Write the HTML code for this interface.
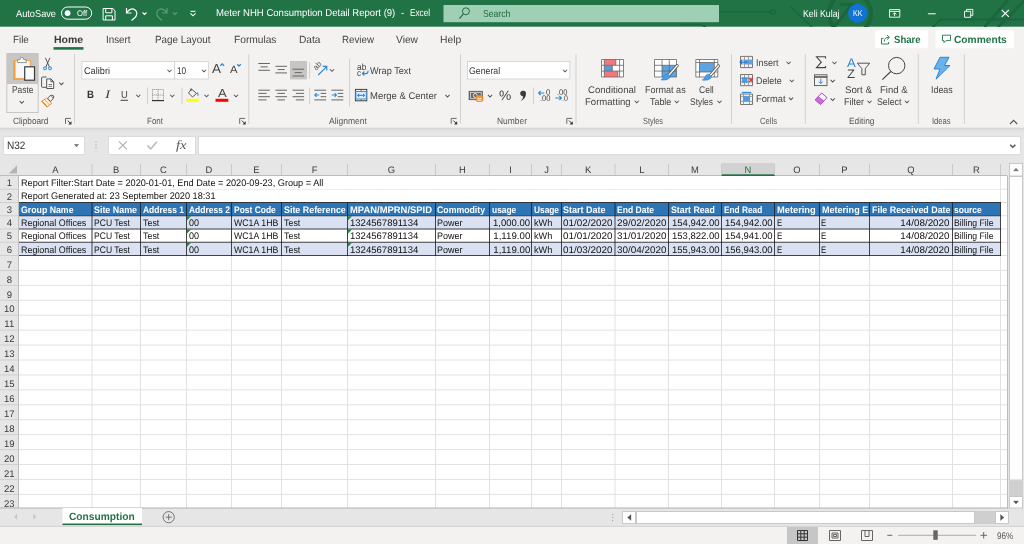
<!DOCTYPE html>
<html lang="en"><head><meta charset="utf-8"><title>Meter NHH Consumption Detail Report (9) - Excel</title>
<style>
html,body{margin:0;padding:0;}
body{width:1024px;height:544px;overflow:hidden;position:relative;background:#e6e6e6;font-family:"Liberation Sans",sans-serif;}
#bg{position:absolute;left:0;top:0;width:1024px;height:544px;will-change:transform;}
#tx{position:absolute;left:0;top:0;width:1024px;height:544px;will-change:transform;}
.t{position:absolute;white-space:pre;display:block;text-rendering:geometricPrecision;}
</style></head><body>
<svg id="bg" width="1024" height="544" viewBox="0 0 1024 544">
<rect x="0" y="0" width="1024" height="27" fill="#217346" />
<rect x="0" y="26.7" width="1024" height="101.1" fill="#f3f2f1" />
<rect x="0" y="127.8" width="1024" height="1" fill="#d3d3d3" />
<rect x="0" y="128.8" width="1024" height="1" fill="#dadada" />
<rect x="0" y="129.8" width="1024" height="1" fill="#e0e0e0" />
<rect x="0" y="130.8" width="1024" height="1" fill="#e4e4e4" />
<rect x="0" y="131.8" width="1024" height="412.2" fill="#e6e6e6" />
<rect x="3.5" y="136.5" width="81" height="18" fill="#fff" stroke="#dcdcdc" stroke-width="1" />
<rect x="108.5" y="136.5" width="87" height="18" fill="#fff" stroke="#dcdcdc" stroke-width="1" />
<rect x="198.5" y="136.5" width="822" height="18" fill="#fff" stroke="#dcdcdc" stroke-width="1" />
<path d="M74.5 144.5L76.5 146.8L78.5 144.5Z" stroke="#666" stroke-width="0.5" fill="#666" />
<rect x="95.5" y="141.5" width="1" height="1" fill="#999" />
<rect x="95.5" y="144.5" width="1" height="1" fill="#999" />
<rect x="95.5" y="147.5" width="1" height="1" fill="#999" />
<path d="M118.8 141.4L126.9 149.2M126.9 141.4L118.8 149.2" stroke="#b4b4b4" stroke-width="1.2" fill="none" />
<path d="M147.4 145.6L150.8 149L156.8 141.8" stroke="#b8b8b8" stroke-width="1.5" fill="none" />
<path d="M1010.1999999999999 144.7L1012.8 147.3L1015.4 144.7" stroke="#555" stroke-width="1.5" fill="none" />
<rect x="0" y="160" width="1024" height="16" fill="#e6e6e6" />
<rect x="19" y="176" width="988.5" height="332" fill="#fff" />
<rect x="721.5" y="163" width="53" height="12" fill="#d2d2d2" />
<line x1="0" y1="175.5" x2="1007.5" y2="175.5" stroke="#bcbcbc" stroke-width="1" />
<line x1="18.5" y1="176" x2="18.5" y2="508" stroke="#bcbcbc" stroke-width="1" />
<rect x="721.5" y="174.3" width="53.3" height="1.7" fill="#217346" />
<line x1="92" y1="164" x2="92" y2="175" stroke="#c9c9c9" stroke-width="1" />
<line x1="140.5" y1="164" x2="140.5" y2="175" stroke="#c9c9c9" stroke-width="1" />
<line x1="186.5" y1="164" x2="186.5" y2="175" stroke="#c9c9c9" stroke-width="1" />
<line x1="231.5" y1="164" x2="231.5" y2="175" stroke="#c9c9c9" stroke-width="1" />
<line x1="281.5" y1="164" x2="281.5" y2="175" stroke="#c9c9c9" stroke-width="1" />
<line x1="347.5" y1="164" x2="347.5" y2="175" stroke="#c9c9c9" stroke-width="1" />
<line x1="435.5" y1="164" x2="435.5" y2="175" stroke="#c9c9c9" stroke-width="1" />
<line x1="489.5" y1="164" x2="489.5" y2="175" stroke="#c9c9c9" stroke-width="1" />
<line x1="531.5" y1="164" x2="531.5" y2="175" stroke="#c9c9c9" stroke-width="1" />
<line x1="561.5" y1="164" x2="561.5" y2="175" stroke="#c9c9c9" stroke-width="1" />
<line x1="615" y1="164" x2="615" y2="175" stroke="#c9c9c9" stroke-width="1" />
<line x1="668.5" y1="164" x2="668.5" y2="175" stroke="#c9c9c9" stroke-width="1" />
<line x1="721.5" y1="164" x2="721.5" y2="175" stroke="#c9c9c9" stroke-width="1" />
<line x1="774.5" y1="164" x2="774.5" y2="175" stroke="#c9c9c9" stroke-width="1" />
<line x1="819.5" y1="164" x2="819.5" y2="175" stroke="#c9c9c9" stroke-width="1" />
<line x1="869.5" y1="164" x2="869.5" y2="175" stroke="#c9c9c9" stroke-width="1" />
<line x1="952.5" y1="164" x2="952.5" y2="175" stroke="#c9c9c9" stroke-width="1" />
<line x1="1000.5" y1="164" x2="1000.5" y2="175" stroke="#c9c9c9" stroke-width="1" />
<path d="M17 165.3L17 173.6L8.8 173.6Z" stroke="none" stroke-width="0" fill="#b4b4b4" />
<line x1="92" y1="176" x2="92" y2="508" stroke="#e2e2e2" stroke-width="1" />
<line x1="140.5" y1="176" x2="140.5" y2="508" stroke="#e2e2e2" stroke-width="1" />
<line x1="186.5" y1="176" x2="186.5" y2="508" stroke="#e2e2e2" stroke-width="1" />
<line x1="231.5" y1="176" x2="231.5" y2="508" stroke="#e2e2e2" stroke-width="1" />
<line x1="281.5" y1="176" x2="281.5" y2="508" stroke="#e2e2e2" stroke-width="1" />
<line x1="347.5" y1="176" x2="347.5" y2="508" stroke="#e2e2e2" stroke-width="1" />
<line x1="435.5" y1="176" x2="435.5" y2="508" stroke="#e2e2e2" stroke-width="1" />
<line x1="489.5" y1="176" x2="489.5" y2="508" stroke="#e2e2e2" stroke-width="1" />
<line x1="531.5" y1="176" x2="531.5" y2="508" stroke="#e2e2e2" stroke-width="1" />
<line x1="561.5" y1="176" x2="561.5" y2="508" stroke="#e2e2e2" stroke-width="1" />
<line x1="615" y1="176" x2="615" y2="508" stroke="#e2e2e2" stroke-width="1" />
<line x1="668.5" y1="176" x2="668.5" y2="508" stroke="#e2e2e2" stroke-width="1" />
<line x1="721.5" y1="176" x2="721.5" y2="508" stroke="#e2e2e2" stroke-width="1" />
<line x1="774.5" y1="176" x2="774.5" y2="508" stroke="#e2e2e2" stroke-width="1" />
<line x1="819.5" y1="176" x2="819.5" y2="508" stroke="#e2e2e2" stroke-width="1" />
<line x1="869.5" y1="176" x2="869.5" y2="508" stroke="#e2e2e2" stroke-width="1" />
<line x1="952.5" y1="176" x2="952.5" y2="508" stroke="#e2e2e2" stroke-width="1" />
<line x1="1000.5" y1="176" x2="1000.5" y2="508" stroke="#e2e2e2" stroke-width="1" />
<line x1="19" y1="189.25" x2="1007.5" y2="189.25" stroke="#e2e2e2" stroke-width="1" />
<line x1="0" y1="189.25" x2="18.5" y2="189.25" stroke="#cfcfcf" stroke-width="1" />
<line x1="19" y1="202.5" x2="1007.5" y2="202.5" stroke="#e2e2e2" stroke-width="1" />
<line x1="0" y1="202.5" x2="18.5" y2="202.5" stroke="#cfcfcf" stroke-width="1" />
<line x1="19" y1="215.75" x2="1007.5" y2="215.75" stroke="#e2e2e2" stroke-width="1" />
<line x1="0" y1="215.75" x2="18.5" y2="215.75" stroke="#cfcfcf" stroke-width="1" />
<line x1="19" y1="229" x2="1007.5" y2="229" stroke="#e2e2e2" stroke-width="1" />
<line x1="0" y1="229" x2="18.5" y2="229" stroke="#cfcfcf" stroke-width="1" />
<line x1="19" y1="242.25" x2="1007.5" y2="242.25" stroke="#e2e2e2" stroke-width="1" />
<line x1="0" y1="242.25" x2="18.5" y2="242.25" stroke="#cfcfcf" stroke-width="1" />
<line x1="19" y1="255.5" x2="1007.5" y2="255.5" stroke="#e2e2e2" stroke-width="1" />
<line x1="0" y1="255.5" x2="18.5" y2="255.5" stroke="#cfcfcf" stroke-width="1" />
<line x1="19" y1="270.43" x2="1007.5" y2="270.43" stroke="#e2e2e2" stroke-width="1" />
<line x1="0" y1="270.43" x2="18.5" y2="270.43" stroke="#cfcfcf" stroke-width="1" />
<line x1="19" y1="285.36" x2="1007.5" y2="285.36" stroke="#e2e2e2" stroke-width="1" />
<line x1="0" y1="285.36" x2="18.5" y2="285.36" stroke="#cfcfcf" stroke-width="1" />
<line x1="19" y1="300.29" x2="1007.5" y2="300.29" stroke="#e2e2e2" stroke-width="1" />
<line x1="0" y1="300.29" x2="18.5" y2="300.29" stroke="#cfcfcf" stroke-width="1" />
<line x1="19" y1="315.22" x2="1007.5" y2="315.22" stroke="#e2e2e2" stroke-width="1" />
<line x1="0" y1="315.22" x2="18.5" y2="315.22" stroke="#cfcfcf" stroke-width="1" />
<line x1="19" y1="330.15000000000003" x2="1007.5" y2="330.15000000000003" stroke="#e2e2e2" stroke-width="1" />
<line x1="0" y1="330.15000000000003" x2="18.5" y2="330.15000000000003" stroke="#cfcfcf" stroke-width="1" />
<line x1="19" y1="345.08000000000004" x2="1007.5" y2="345.08000000000004" stroke="#e2e2e2" stroke-width="1" />
<line x1="0" y1="345.08000000000004" x2="18.5" y2="345.08000000000004" stroke="#cfcfcf" stroke-width="1" />
<line x1="19" y1="360.01000000000005" x2="1007.5" y2="360.01000000000005" stroke="#e2e2e2" stroke-width="1" />
<line x1="0" y1="360.01000000000005" x2="18.5" y2="360.01000000000005" stroke="#cfcfcf" stroke-width="1" />
<line x1="19" y1="374.94000000000005" x2="1007.5" y2="374.94000000000005" stroke="#e2e2e2" stroke-width="1" />
<line x1="0" y1="374.94000000000005" x2="18.5" y2="374.94000000000005" stroke="#cfcfcf" stroke-width="1" />
<line x1="19" y1="389.87000000000006" x2="1007.5" y2="389.87000000000006" stroke="#e2e2e2" stroke-width="1" />
<line x1="0" y1="389.87000000000006" x2="18.5" y2="389.87000000000006" stroke="#cfcfcf" stroke-width="1" />
<line x1="19" y1="404.80000000000007" x2="1007.5" y2="404.80000000000007" stroke="#e2e2e2" stroke-width="1" />
<line x1="0" y1="404.80000000000007" x2="18.5" y2="404.80000000000007" stroke="#cfcfcf" stroke-width="1" />
<line x1="19" y1="419.7300000000001" x2="1007.5" y2="419.7300000000001" stroke="#e2e2e2" stroke-width="1" />
<line x1="0" y1="419.7300000000001" x2="18.5" y2="419.7300000000001" stroke="#cfcfcf" stroke-width="1" />
<line x1="19" y1="434.6600000000001" x2="1007.5" y2="434.6600000000001" stroke="#e2e2e2" stroke-width="1" />
<line x1="0" y1="434.6600000000001" x2="18.5" y2="434.6600000000001" stroke="#cfcfcf" stroke-width="1" />
<line x1="19" y1="449.5900000000001" x2="1007.5" y2="449.5900000000001" stroke="#e2e2e2" stroke-width="1" />
<line x1="0" y1="449.5900000000001" x2="18.5" y2="449.5900000000001" stroke="#cfcfcf" stroke-width="1" />
<line x1="19" y1="464.5200000000001" x2="1007.5" y2="464.5200000000001" stroke="#e2e2e2" stroke-width="1" />
<line x1="0" y1="464.5200000000001" x2="18.5" y2="464.5200000000001" stroke="#cfcfcf" stroke-width="1" />
<line x1="19" y1="479.4500000000001" x2="1007.5" y2="479.4500000000001" stroke="#e2e2e2" stroke-width="1" />
<line x1="0" y1="479.4500000000001" x2="18.5" y2="479.4500000000001" stroke="#cfcfcf" stroke-width="1" />
<line x1="19" y1="494.3800000000001" x2="1007.5" y2="494.3800000000001" stroke="#e2e2e2" stroke-width="1" />
<line x1="0" y1="494.3800000000001" x2="18.5" y2="494.3800000000001" stroke="#cfcfcf" stroke-width="1" />
<rect x="19.5" y="176.2" width="980.4" height="12.55" fill="#fff" />
<rect x="19.5" y="189.75" width="980.4" height="12.3" fill="#fff" />
<rect x="19" y="202.5" width="981.5" height="13.25" fill="#2e75b6" />
<rect x="19" y="215.75" width="981.5" height="13.25" fill="#d9e1f2" />
<rect x="19" y="242.25" width="981.5" height="13.25" fill="#d9e1f2" />
<line x1="19" y1="202.5" x2="1001.0" y2="202.5" stroke="#1a1a1a" stroke-width="0.8" />
<line x1="19" y1="215.75" x2="1001.0" y2="215.75" stroke="#1a1a1a" stroke-width="0.8" />
<line x1="19" y1="229" x2="1001.0" y2="229" stroke="#1a1a1a" stroke-width="0.8" />
<line x1="19" y1="242.25" x2="1001.0" y2="242.25" stroke="#1a1a1a" stroke-width="0.8" />
<line x1="19" y1="255.5" x2="1001.0" y2="255.5" stroke="#1a1a1a" stroke-width="0.8" />
<line x1="92" y1="202.5" x2="92" y2="255.9" stroke="#1a1a1a" stroke-width="0.8" />
<line x1="140.5" y1="202.5" x2="140.5" y2="255.9" stroke="#1a1a1a" stroke-width="0.8" />
<line x1="186.5" y1="202.5" x2="186.5" y2="255.9" stroke="#1a1a1a" stroke-width="0.8" />
<line x1="231.5" y1="202.5" x2="231.5" y2="255.9" stroke="#1a1a1a" stroke-width="0.8" />
<line x1="281.5" y1="202.5" x2="281.5" y2="255.9" stroke="#1a1a1a" stroke-width="0.8" />
<line x1="347.5" y1="202.5" x2="347.5" y2="255.9" stroke="#1a1a1a" stroke-width="0.8" />
<line x1="435.5" y1="202.5" x2="435.5" y2="255.9" stroke="#1a1a1a" stroke-width="0.8" />
<line x1="489.5" y1="202.5" x2="489.5" y2="255.9" stroke="#1a1a1a" stroke-width="0.8" />
<line x1="531.5" y1="202.5" x2="531.5" y2="255.9" stroke="#1a1a1a" stroke-width="0.8" />
<line x1="561.5" y1="202.5" x2="561.5" y2="255.9" stroke="#1a1a1a" stroke-width="0.8" />
<line x1="615" y1="202.5" x2="615" y2="255.9" stroke="#1a1a1a" stroke-width="0.8" />
<line x1="668.5" y1="202.5" x2="668.5" y2="255.9" stroke="#1a1a1a" stroke-width="0.8" />
<line x1="721.5" y1="202.5" x2="721.5" y2="255.9" stroke="#1a1a1a" stroke-width="0.8" />
<line x1="774.5" y1="202.5" x2="774.5" y2="255.9" stroke="#1a1a1a" stroke-width="0.8" />
<line x1="819.5" y1="202.5" x2="819.5" y2="255.9" stroke="#1a1a1a" stroke-width="0.8" />
<line x1="869.5" y1="202.5" x2="869.5" y2="255.9" stroke="#1a1a1a" stroke-width="0.8" />
<line x1="952.5" y1="202.5" x2="952.5" y2="255.9" stroke="#1a1a1a" stroke-width="0.8" />
<line x1="1000.5" y1="202.5" x2="1000.5" y2="255.9" stroke="#1a1a1a" stroke-width="0.8" />
<path d="M187.0 216.25L191.0 216.25L187.0 220.25Z" stroke="none" stroke-width="0" fill="#1e8a3c" />
<path d="M187.0 229.5L191.0 229.5L187.0 233.5Z" stroke="none" stroke-width="0" fill="#1e8a3c" />
<path d="M187.0 242.75L191.0 242.75L187.0 246.75Z" stroke="none" stroke-width="0" fill="#1e8a3c" />
<path d="M348.0 216.25L352.0 216.25L348.0 220.25Z" stroke="none" stroke-width="0" fill="#1e8a3c" />
<path d="M348.0 229.5L352.0 229.5L348.0 233.5Z" stroke="none" stroke-width="0" fill="#1e8a3c" />
<path d="M348.0 242.75L352.0 242.75L348.0 246.75Z" stroke="none" stroke-width="0" fill="#1e8a3c" />
<line x1="1007.5" y1="176" x2="1007.5" y2="508" stroke="#bcbcbc" stroke-width="1" />
<rect x="1009.5" y="163.5" width="13" height="12.5" fill="#fff" stroke="#c8c8c8" stroke-width="1" />
<path d="M1013.5 171L1016 168L1018.5 171Z" stroke="#777" stroke-width="0.3" fill="#777" />
<rect x="1009.5" y="176.5" width="13" height="303.5" fill="#fff" stroke="#c8c8c8" stroke-width="1" />
<rect x="1009" y="480.5" width="14" height="16" fill="#cfcfcf" />
<rect x="1009.5" y="496.5" width="13" height="11.5" fill="#fff" stroke="#c8c8c8" stroke-width="1" />
<path d="M1013.5 501L1016 504L1018.5 501Z" stroke="#555" stroke-width="0.3" fill="#555" />
<line x1="0" y1="508" x2="1008.5" y2="508" stroke="#b0b0b0" stroke-width="1" />
<rect x="62.5" y="508" width="79.5" height="16" fill="#fff" />
<rect x="62.5" y="523.5" width="79.5" height="1.6" fill="#217346" />
<path d="M17 514L14.5 516.7L17 519.4Z" stroke="#c4c4c4" stroke-width="0.3" fill="#c4c4c4" />
<path d="M33.5 514L36 516.7L33.5 519.4Z" stroke="#c4c4c4" stroke-width="0.3" fill="#c4c4c4" />
<circle cx="168.7" cy="517.2" r="5.6" fill="none" stroke="#666" stroke-width="0.9"/>
<path d="M165.7 517.2H171.7M168.7 514.2V520.2" stroke="#666" stroke-width="0.9" fill="none" />
<rect x="612" y="514" width="1.2" height="1.2" fill="#aaa" />
<rect x="612" y="517" width="1.2" height="1.2" fill="#aaa" />
<rect x="612" y="520" width="1.2" height="1.2" fill="#aaa" />
<rect x="622.5" y="511.5" width="13" height="12" fill="#fff" stroke="#c8c8c8" stroke-width="1" />
<path d="M631 514.5L627.5 517.5L631 520.5Z" stroke="#555" stroke-width="0.3" fill="#555" />
<rect x="636.5" y="511.5" width="338" height="12" fill="#fff" stroke="#c8c8c8" stroke-width="1" />
<rect x="975" y="511" width="20" height="13" fill="#cfcfcf" />
<rect x="995.5" y="511.5" width="13" height="12" fill="#fff" stroke="#c8c8c8" stroke-width="1" />
<path d="M1000.5 514.5L1004 517.5L1000.5 520.5Z" stroke="#555" stroke-width="0.3" fill="#555" />
<rect x="0" y="526" width="1024" height="18" fill="#f3f2f1" />
<line x1="0" y1="526.3" x2="1024" y2="526.3" stroke="#cfcfcf" stroke-width="1" />
<rect x="787" y="527" width="31" height="17" fill="#c6c6c6" />
<path d="M797.5 530.5H807.5V540.5H797.5ZM800.8 530.5V540.5M804.2 530.5V540.5M797.5 533.8H807.5M797.5 537.2H807.5" stroke="#333" stroke-width="1" fill="none" />
<path d="M829.5 530.5H840.5V540.5H829.5ZM832 533H838V538H832ZM833.5 534.5H836.5V536.5H833.5Z" stroke="#555" stroke-width="0.9" fill="none" />
<path d="M861.5 530.5H872.5V540.5H861.5ZM865 530.5V536.5H869V530.5" stroke="#555" stroke-width="0.9" fill="none" />
<line x1="887.3" y1="535.3" x2="892.3" y2="535.3" stroke="#666" stroke-width="1" />
<line x1="898" y1="535.3" x2="976" y2="535.3" stroke="#999" stroke-width="0.8" />
<rect x="933.3" y="530.3" width="4.4" height="9.5" fill="#666" />
<path d="M980.5 535.3H987M983.7 532V538.5" stroke="#666" stroke-width="1" fill="none" />
<clipPath id="tb"><rect x="0" y="0" width="1024" height="27"/></clipPath><g clip-path="url(#tb)">
<path d="M719 11.8H770.5" stroke="#1b663c" stroke-width="1.4" fill="none" />
<circle cx="773" cy="11.8" r="2.4" fill="none" stroke="#1b663c" stroke-width="1.3"/>
<circle cx="850" cy="13.5" r="21" fill="none" stroke="#1b663c" stroke-width="4"/>
<path d="M834 27L851 6M840 4.5H852.5V15" stroke="#1b663c" stroke-width="3.2" fill="none" />
<path d="M790 6L812 27" stroke="#1b663c" stroke-width="1.6" fill="none" />
<path d="M680 24.5H700L706 27" stroke="#1b663c" stroke-width="1.4" fill="none" />
<path d="M932.5 27.5L940.5 19.5H1024" stroke="#1b663c" stroke-width="2" fill="none" />
<path d="M984.5 27L1008 0" stroke="#1b663c" stroke-width="2.8" fill="none" />
<path d="M998 27L1024 1" stroke="#1b663c" stroke-width="2.8" fill="none" />
</g>
<rect x="61.5" y="7" width="30.2" height="12.2" rx="6.1" fill="none" stroke="#ffffff" stroke-width="1"/>
<circle cx="67.6" cy="13.1" r="2.9" fill="#ffffff"/>
<path d="M103.1 8.5H112.8L115 10.7V20H103.1ZM105.7 8.5V12.8H111.9V8.5M105.7 20V15.8H112.4V20" stroke="#ffffff" stroke-width="1" fill="none" />
<path d="M126.5 8V13H131.5M126.8 12.8C128.5 9.5 132 8 134.5 9.5C137.5 11.3 137.5 15 135 17.5L131.5 20.5" stroke="#ffffff" stroke-width="1.2" fill="none" />
<path d="M142.5 12.5L144.5 14.5L146.5 12.5" stroke="#ffffff" stroke-width="1.1" fill="none" />
<path d="M167 8V13H162M166.7 12.8C165 9.5 161.5 8 159 9.5C156 11.3 156 15 158.5 17.5L162 20.5" stroke="#5b9b78" stroke-width="1.2" fill="none" />
<path d="M173 12.5L175 14.5L177 12.5" stroke="#5b9b78" stroke-width="1.1" fill="none" />
<path d="M190.5 11.3H195.5" stroke="#ffffff" stroke-width="1" fill="none" />
<path d="M190.5 13.3L193 15.8L195.5 13.3" stroke="#ffffff" stroke-width="1.1" fill="none" />
<rect x="443.5" y="5" width="275.5" height="17.2" fill="#9fcfb4" />
<circle cx="465.9" cy="11.3" r="3.5" fill="none" stroke="#1f6a40" stroke-width="1"/>
<path d="M463.4 13.9L459.4 18.6" stroke="#1f6a40" stroke-width="1.1" fill="none" />
<circle cx="857.6" cy="13.3" r="9.6" fill="#0f74d4"/>
<path d="M889.5 9.6H899.8V17.2H889.5ZM889.5 11.4H899.8M894.6 16V12.8M892.9 14.4L894.6 12.7L896.3 14.4" stroke="#ffffff" stroke-width="0.9" fill="none" />
<line x1="927.9" y1="13.8" x2="935.7" y2="13.8" stroke="#ffffff" stroke-width="1" />
<path d="M964.5 11.3H970.7V17.3H964.5ZM966.5 11.3V9.4H972.8V15.4H970.7" stroke="#ffffff" stroke-width="0.9" fill="none" />
<path d="M1001.7 9.8L1008.9 16.9M1008.9 9.8L1001.7 16.9" stroke="#ffffff" stroke-width="1.1" fill="none" />
<rect x="53.5" y="47.1" width="30" height="2.6" fill="#217346" />
<rect x="875" y="30" width="53" height="18.3" rx="2" fill="#fff"/>
<rect x="935.5" y="30" width="78.5" height="18.3" rx="2" fill="#fff"/>
<path d="M883.5 38.3H881.5V44H888.5V42M884.3 41.5C884.3 38.6 885.8 37.3 888.8 37.3M887 35L889.5 37.3L887 39.6" stroke="#217346" stroke-width="0.9" fill="none" />
<path d="M942.5 35.2H950.5V40.6H946L944 42.6V40.6H942.5Z" stroke="#217346" stroke-width="0.9" fill="none" />
<line x1="74.5" y1="54" x2="74.5" y2="123.7" stroke="#d2d0ce" stroke-width="1" />
<line x1="248.8" y1="54" x2="248.8" y2="123.7" stroke="#d2d0ce" stroke-width="1" />
<line x1="460.5" y1="54" x2="460.5" y2="123.7" stroke="#d2d0ce" stroke-width="1" />
<line x1="576" y1="54" x2="576" y2="123.7" stroke="#d2d0ce" stroke-width="1" />
<line x1="731.5" y1="54" x2="731.5" y2="123.7" stroke="#d2d0ce" stroke-width="1" />
<line x1="805.3" y1="54" x2="805.3" y2="123.7" stroke="#d2d0ce" stroke-width="1" />
<line x1="918.3" y1="54" x2="918.3" y2="123.7" stroke="#d2d0ce" stroke-width="1" />
<line x1="964.4" y1="54" x2="964.4" y2="123.7" stroke="#d2d0ce" stroke-width="1" />
<path d="M65.5 123.80000000000001V118.4H70.9" stroke="#6a6a6a" stroke-width="1" fill="none" />
<path d="M67.7 120.60000000000001L70.5 123.4" stroke="#333" stroke-width="1" fill="none" />
<path d="M71.5 121.2V124.4H68.3Z" stroke="none" stroke-width="0" fill="#333" />
<path d="M239.7 123.80000000000001V118.4H245.1" stroke="#6a6a6a" stroke-width="1" fill="none" />
<path d="M241.89999999999998 120.60000000000001L244.7 123.4" stroke="#333" stroke-width="1" fill="none" />
<path d="M245.7 121.2V124.4H242.5Z" stroke="none" stroke-width="0" fill="#333" />
<path d="M451.2 123.80000000000001V118.4H456.59999999999997" stroke="#6a6a6a" stroke-width="1" fill="none" />
<path d="M453.4 120.60000000000001L456.2 123.4" stroke="#333" stroke-width="1" fill="none" />
<path d="M457.2 121.2V124.4H454.0Z" stroke="none" stroke-width="0" fill="#333" />
<path d="M566.8 123.80000000000001V118.4H572.1999999999999" stroke="#6a6a6a" stroke-width="1" fill="none" />
<path d="M569.0 120.60000000000001L571.8 123.4" stroke="#333" stroke-width="1" fill="none" />
<path d="M572.8 121.2V124.4H569.5999999999999Z" stroke="none" stroke-width="0" fill="#333" />
<path d="M1010 124L1013.6 120.4L1017.2 124" stroke="#555" stroke-width="1.1" fill="none" />
<rect x="6.3" y="53" width="32.4" height="30" fill="#c8c6c4" />
<rect x="6.8" y="83.5" width="31.4" height="29" fill="none" stroke="#c8c6c4" stroke-width="1" />
<rect x="13.9" y="60.6" width="16.4" height="18.6" fill="#f7f7f7" stroke="#f0a040" stroke-width="1" />
<rect x="13.6" y="60.4" width="1.9" height="19.2" fill="#f0a040" />
<rect x="13.6" y="78.2" width="12" height="1.6" fill="#f0a040" />
<path d="M17.6 62.6V59.6H20Q20.2 57.4 21.9 57.4Q23.6 57.4 23.8 59.6H26.2V62.6Z" stroke="#8a8a8a" stroke-width="0.9" fill="#fbfbfb" />
<rect x="24.7" y="66.8" width="9.8" height="13.4" fill="#fbfbfb" stroke="#3b3b3b" stroke-width="1.2" />
<path d="M19.7 101.15L21.8 103.25L23.900000000000002 101.15" stroke="#555" stroke-width="1.05" fill="none" />
<path d="M45.4 57.8L49.4 67M49.9 57.8L45.9 67" stroke="#444444" stroke-width="0.9" fill="none" />
<circle cx="45" cy="68.3" r="1.55" fill="#bcdcf5" stroke="#2b88d8" stroke-width="0.9"/>
<circle cx="50" cy="68.3" r="1.55" fill="#bcdcf5" stroke="#2b88d8" stroke-width="0.9"/>
<path d="M46.5 77H42.6Q41.6 77 41.6 78V86.3Q41.6 87.3 42.6 87.3H46.5" stroke="#444444" stroke-width="0.9" fill="none" />
<path d="M46.7 78.9H50.9L53.7 81.7V88.5H46.7ZM50.9 78.9V81.7H53.7" stroke="#444444" stroke-width="0.9" fill="#f8f8f8" />
<path d="M48.5 84.5H52M48.5 86.4H52" stroke="#444444" stroke-width="0.7" fill="none" />
<path d="M59.3 82.55L61.4 84.64999999999999L63.5 82.55" stroke="#555" stroke-width="1.05" fill="none" />
<path d="M41.7 101.2L46.6 98.2L51.8 103.2L47 107Z" stroke="#e8821e" stroke-width="0.9" fill="#fdf3e7" />
<path d="M41.7 101.2L47 107L44.8 103.6Z" stroke="#e8821e" stroke-width="0.6" fill="#e8821e" />
<path d="M44.6 99.6L49.6 104.9" stroke="#e8821e" stroke-width="0.7" fill="none" />
<path d="M47.6 98.2L51 95L53.9 96L53.2 98.6L50.5 101.6Z" stroke="#555" stroke-width="0.9" fill="#f3f2f1" />
<path d="M50.9 95.4L53.2 98.4" stroke="#555" stroke-width="0.7" fill="none" />
<rect x="81.8" y="61.5" width="92.8" height="17.5" fill="#fff" stroke="#d8d6d4" stroke-width="1" />
<rect x="174.6" y="61.5" width="33.8" height="17.5" fill="#fff" stroke="#d8d6d4" stroke-width="1" />
<path d="M167.4 69.75L169.5 71.85L171.6 69.75" stroke="#555" stroke-width="1.05" fill="none" />
<path d="M201.9 69.75L204 71.85L206.1 69.75" stroke="#555" stroke-width="1.05" fill="none" />
<path d="M220.3 65.8L222.2 63.9L224.1 65.8" stroke="#2b88d8" stroke-width="1.3" fill="none" />
<path d="M237.2 64.2L239 66L240.8 64.2" stroke="#2b88d8" stroke-width="1.3" fill="none" />
<line x1="120.5" y1="100.3" x2="128" y2="100.3" stroke="#444" stroke-width="1" />
<path d="M136.20000000000002 94.75L138.3 96.85L140.4 94.75" stroke="#555" stroke-width="1.05" fill="none" />
<line x1="147.5" y1="87.5" x2="147.5" y2="104" stroke="#d2d0ce" stroke-width="1" />
<path d="M152.5 89.5H163.5M152.5 89.5V100.5M163.5 89.5V100.5M158 89.5V100.5M152.5 95H163.5" stroke="#8a8a8a" stroke-width="0.9" fill="none" stroke-dasharray="1 0.8"/>
<line x1="152" y1="100.6" x2="164" y2="100.6" stroke="#333" stroke-width="1.2" />
<path d="M170.20000000000002 94.75L172.3 96.85L174.4 94.75" stroke="#555" stroke-width="1.05" fill="none" />
<line x1="182" y1="87.5" x2="182" y2="104" stroke="#d2d0ce" stroke-width="1" />
<path d="M191.5 89L196.5 93.5L192.5 97L188.5 93ZM191 88.5V91" stroke="#444444" stroke-width="0.9" fill="none" />
<path d="M197.3 92.5Q198.8 94.5 197.8 95.8" stroke="#2b88d8" stroke-width="1.2" fill="none" />
<rect x="186.3" y="98.8" width="12.8" height="3" fill="#ffff00" />
<path d="M204.4 94.75L206.5 96.85L208.6 94.75" stroke="#555" stroke-width="1.05" fill="none" />
<rect x="215.5" y="98.8" width="12.8" height="3" fill="#ff0000" />
<path d="M233.9 94.75L236 96.85L238.1 94.75" stroke="#555" stroke-width="1.05" fill="none" />
<rect x="290" y="61" width="17" height="18.4" fill="#c8c6c4" />
<line x1="258.3" y1="63.5" x2="269.90000000000003" y2="63.5" stroke="#666" stroke-width="1" />
<line x1="260.5" y1="66.9" x2="267.7" y2="66.9" stroke="#666" stroke-width="1" />
<line x1="258.3" y1="70.3" x2="269.90000000000003" y2="70.3" stroke="#666" stroke-width="1" />
<line x1="275.4" y1="66.3" x2="287.0" y2="66.3" stroke="#666" stroke-width="1" />
<line x1="277.59999999999997" y1="69.6" x2="284.79999999999995" y2="69.6" stroke="#666" stroke-width="1" />
<line x1="275.4" y1="72.9" x2="287.0" y2="72.9" stroke="#666" stroke-width="1" />
<line x1="292.5" y1="69.2" x2="304.1" y2="69.2" stroke="#666" stroke-width="1" />
<line x1="294.7" y1="72.6" x2="301.9" y2="72.6" stroke="#666" stroke-width="1" />
<line x1="292.5" y1="76.0" x2="304.1" y2="76.0" stroke="#666" stroke-width="1" />
<line x1="309.6" y1="62" x2="309.6" y2="78.6" stroke="#d2d0ce" stroke-width="1" />
<text x="0" y="0" font-family="Liberation Sans, sans-serif" font-size="7.8" fill="#555" transform="translate(316.3 70.8) rotate(-48)">ab</text>
<path d="M318.2 75L326.4 66.8M322.6 66.4H326.8V70.6" stroke="#2b88d8" stroke-width="1.1" fill="none" />
<path d="M329.9 69.25L332 71.35L334.1 69.25" stroke="#555" stroke-width="1.05" fill="none" />
<line x1="349.6" y1="58.8" x2="349.6" y2="106.8" stroke="#d2d0ce" stroke-width="1" />
<path d="M362.3 73.6H366Q368 73.6 368 71.6V70.4M364.4 71.5L362.3 73.6L364.4 75.7" stroke="#2b88d8" stroke-width="1.1" fill="none" />
<line x1="258.3" y1="90.2" x2="269.9" y2="90.2" stroke="#666" stroke-width="1" />
<line x1="275.4" y1="90.2" x2="287" y2="90.2" stroke="#666" stroke-width="1" />
<line x1="292.5" y1="90.2" x2="304.1" y2="90.2" stroke="#666" stroke-width="1" />
<line x1="258.3" y1="93.4" x2="266.5" y2="93.4" stroke="#666" stroke-width="1" />
<line x1="277.4" y1="93.4" x2="285" y2="93.4" stroke="#666" stroke-width="1" />
<line x1="295.9" y1="93.4" x2="304.1" y2="93.4" stroke="#666" stroke-width="1" />
<line x1="258.3" y1="96.7" x2="269.9" y2="96.7" stroke="#666" stroke-width="1" />
<line x1="275.4" y1="96.7" x2="287" y2="96.7" stroke="#666" stroke-width="1" />
<line x1="292.5" y1="96.7" x2="304.1" y2="96.7" stroke="#666" stroke-width="1" />
<line x1="258.3" y1="99.9" x2="266.5" y2="99.9" stroke="#666" stroke-width="1" />
<line x1="277.4" y1="99.9" x2="285" y2="99.9" stroke="#666" stroke-width="1" />
<line x1="295.9" y1="99.9" x2="304.1" y2="99.9" stroke="#666" stroke-width="1" />
<line x1="309.6" y1="87.5" x2="309.6" y2="104" stroke="#d2d0ce" stroke-width="1" />
<line x1="314.3" y1="90.2" x2="326.2" y2="90.2" stroke="#666" stroke-width="1" />
<line x1="320.6" y1="93.4" x2="326.2" y2="93.4" stroke="#666" stroke-width="1" />
<line x1="320.6" y1="96.7" x2="326.2" y2="96.7" stroke="#666" stroke-width="1" />
<line x1="314.3" y1="99.9" x2="326.2" y2="99.9" stroke="#666" stroke-width="1" />
<line x1="331.4" y1="90.2" x2="343.29999999999995" y2="90.2" stroke="#666" stroke-width="1" />
<line x1="337.7" y1="93.4" x2="343.29999999999995" y2="93.4" stroke="#666" stroke-width="1" />
<line x1="337.7" y1="96.7" x2="343.29999999999995" y2="96.7" stroke="#666" stroke-width="1" />
<line x1="331.4" y1="99.9" x2="343.29999999999995" y2="99.9" stroke="#666" stroke-width="1" />
<path d="M319.2 95H314.8M316.6 93.2L314.8 95L316.6 96.8" stroke="#2b88d8" stroke-width="1.1" fill="none" />
<path d="M331.8 95H336.4M334.6 93.2L336.4 95L334.6 96.8" stroke="#2b88d8" stroke-width="1.1" fill="none" />
<rect x="355.4" y="89.4" width="11.4" height="11.4" fill="none" stroke="#444" stroke-width="1" />
<rect x="355.9" y="91.6" width="10.4" height="7.4" fill="#e3f0fb" stroke="#2b88d8" stroke-width="0.9" />
<path d="M357.6 95.3H364.6M359.2 93.8L357.6 95.3L359.2 96.8M363 93.8L364.6 95.3L363 96.8" stroke="#1b78d0" stroke-width="1" fill="none" />
<path d="M361.1 89.4V91.2M361.1 99.4V100.8" stroke="#444" stroke-width="0.8" fill="none" />
<path d="M445.4 94.95L447.5 97.05L449.6 94.95" stroke="#555" stroke-width="1.05" fill="none" />
<rect x="467.5" y="61.5" width="102.3" height="17.5" fill="#fff" stroke="#d8d6d4" stroke-width="1" />
<path d="M562.9 69.75L565 71.85L567.1 69.75" stroke="#555" stroke-width="1.05" fill="none" />
<rect x="469" y="91.2" width="13.6" height="8.6" fill="#6a6a6a" stroke="#555" stroke-width="0.6" />
<rect x="470.4" y="92.6" width="10.8" height="5.8" fill="none" stroke="#e4e4e4" stroke-width="0.7" />
<ellipse cx="475.3" cy="95.5" rx="1.9" ry="2.1" fill="none" stroke="#f0f0f0" stroke-width="0.9"/>
<path d="M476.2 96.6C476.2 95.4 482.8 95.4 482.8 96.6V100.6C482.8 101.9 476.2 101.9 476.2 100.6Z" stroke="#e8821e" stroke-width="0.9" fill="#f59b3e" />
<path d="M477.4 98.3Q479.5 99.1 481.6 98.3M477.4 100Q479.5 100.8 481.6 100" stroke="#fff" stroke-width="0.8" fill="none" />
<path d="M487.9 94.95L490 97.05L492.1 94.95" stroke="#555" stroke-width="1.05" fill="none" />
<path d="M520.2 93.6A2.9 2.9 0 1 1 526 93.9Q525.9 98.6 520.6 100.9Q523.2 98.6 523.2 96.4Q520.4 96.3 520.2 93.6Z" stroke="none" stroke-width="0" fill="#3a3a3a" />
<line x1="533.5" y1="87.5" x2="533.5" y2="104" stroke="#d2d0ce" stroke-width="1" />
<path d="M544.2 93H538.6M540.6 91L538.6 93L540.6 95" stroke="#2b88d8" stroke-width="1.1" fill="none" />
<path d="M555.4 98H561.4M559.4 96L561.4 98L559.4 100" stroke="#2b88d8" stroke-width="1.1" fill="none" />
<rect x="601.5" y="59.5" width="22" height="17.5" fill="#fff" />
<rect x="604.3" y="59.5" width="11.5" height="5.8" fill="#f4777c" />
<rect x="604.3" y="65.3" width="8" height="5.8" fill="#5b9bd5" />
<rect x="604.3" y="71.1" width="13.5" height="5.9" fill="#f4777c" />
<path d="M601.5 59.5H623.5V77H601.5ZM604.3 59.5V77M601.5 65.3H623.5M601.5 71.1H623.5M615.8 59.5V65.3M619.6 59.5V77M612.3 65.3V71.1M617.8 71.1V77" stroke="#666" stroke-width="0.8" fill="none" />
<path d="M634.6999999999999 100.75L636.8 102.85L638.9 100.75" stroke="#555" stroke-width="1.05" fill="none" />
<rect x="654.5" y="59.5" width="22" height="17.5" fill="#fff" />
<rect x="662" y="65.3" width="14.5" height="11.7" fill="#5ea3e0" />
<path d="M654.5 59.5H676.5V77H654.5ZM662 59.5V77M669.3 59.5V77M654.5 65.3H676.5M654.5 71.1H676.5" stroke="#666" stroke-width="0.8" fill="none" />
<path d="M677.2 65.6L668.8 75.2" stroke="#555" stroke-width="3" fill="none" stroke-linecap="round"/>
<path d="M677.2 65.6L668.8 75.2" stroke="#f6f6f6" stroke-width="1.5" fill="none" stroke-linecap="round"/>
<path d="M667.4 74L670 76.4C669.5 79.6 664.5 80.6 661 79.8C664 78.6 663.4 73.6 667.4 74Z" stroke="#1e7bd0" stroke-width="0.6" fill="#4a9de4" />
<path d="M674.6999999999999 100.75L676.8 102.85L678.9 100.75" stroke="#555" stroke-width="1.05" fill="none" />
<rect x="695.8" y="59.5" width="22" height="17.5" fill="#fff" />
<rect x="699.5" y="62.5" width="14.8" height="9.5" fill="#5ea3e0" />
<path d="M695.8 59.5H717.8V77H695.8ZM699.5 59.5V77M695.8 62.5H717.8M695.8 72H717.8M714.3 59.5V77" stroke="#666" stroke-width="0.8" fill="none" />
<path d="M718.6 65.8L710.2 75.4" stroke="#555" stroke-width="3" fill="none" stroke-linecap="round"/>
<path d="M718.6 65.8L710.2 75.4" stroke="#f6f6f6" stroke-width="1.5" fill="none" stroke-linecap="round"/>
<path d="M708.8 74.2L711.4 76.6C710.9 79.8 705.9 80.8 702.4 80C705.4 78.8 704.8 73.8 708.8 74.2Z" stroke="#1e7bd0" stroke-width="0.6" fill="#4a9de4" />
<path d="M717.4 100.75L719.5 102.85L721.6 100.75" stroke="#555" stroke-width="1.05" fill="none" />
<path d="M740.5 56.4H752.5V67.6H740.5Z" stroke="#666" stroke-width="0.9" fill="none" />
<path d="M744.5 56.4V67.6M748.5 56.4V67.6M740.5 60.1H752.5M740.5 63.9H752.5" stroke="#8a8a8a" stroke-width="0.8" fill="none" />
<rect x="744" y="60" width="8.6" height="4.2" fill="#5ea3e0" />
<path d="M747.5 62.1H740M742 60.2L740 62.1L742 64" stroke="#1b78d0" stroke-width="1.1" fill="none" />
<path d="M786.5 61.75L788.6 63.849999999999994L790.7 61.75" stroke="#555" stroke-width="1.05" fill="none" />
<path d="M740.5 74.5H752.5V85.7H740.5Z" stroke="#666" stroke-width="0.9" fill="none" />
<path d="M744.5 74.5V85.7M748.5 74.5V85.7M740.5 78.2H752.5M740.5 82.0H752.5" stroke="#8a8a8a" stroke-width="0.8" fill="none" />
<rect x="742.2" y="77.6" width="5" height="5" fill="#4a9de4" stroke="#1b78d0" stroke-width="0.6" stroke-dasharray="1 0.7"/>
<path d="M749 78L752.8 82.2M752.8 78L749 82.2" stroke="#e03030" stroke-width="1.2" fill="none" />
<path d="M789.6999999999999 79.75L791.8 81.85L793.9 79.75" stroke="#555" stroke-width="1.05" fill="none" />
<path d="M740.5 94H752.5V104.5H740.5Z" stroke="#666" stroke-width="0.9" fill="none" />
<path d="M743.5 94V104.5M749.5 94V104.5M740.5 96.4H752.5M740.5 101.4H752.5" stroke="#8a8a8a" stroke-width="0.8" fill="none" />
<rect x="743.2" y="96.3" width="6.6" height="5" fill="#4a9de4" />
<path d="M741.8 92.4H751.2" stroke="#2b88d8" stroke-width="1.1" fill="none" />
<path d="M788.9 97.55L791 99.64999999999999L793.1 97.55" stroke="#555" stroke-width="1.05" fill="none" />
<path d="M825.5 58.5V56.8H816.5L821.3 62.2L816.5 67.6H825.5V65.9" stroke="#444" stroke-width="1.1" fill="none" />
<path d="M832.4 61.75L834.5 63.849999999999994L836.6 61.75" stroke="#555" stroke-width="1.05" fill="none" />
<rect x="814.5" y="74.8" width="12.5" height="10.8" fill="none" stroke="#555" stroke-width="0.9" />
<line x1="814.5" y1="77" x2="827" y2="77" stroke="#555" stroke-width="1.6" />
<path d="M820.8 78.8V83.5M818.8 81.6L820.8 83.6L822.8 81.6" stroke="#2b88d8" stroke-width="1" fill="none" />
<path d="M830.6 79.95L832.7 82.05L834.8000000000001 79.95" stroke="#555" stroke-width="1.05" fill="none" />
<path d="M821.7 93L827 97.6L820.5 104.4L815.2 99.8Z" stroke="#b146c2" stroke-width="1" fill="#fbf4fc" />
<path d="M818.3 96.5L823.7 101.1L820.5 104.4L815.2 99.8Z" stroke="#b146c2" stroke-width="0.8" fill="#c670d4" />
<path d="M830.6 98.45L832.7 100.55L834.8000000000001 98.45" stroke="#555" stroke-width="1.05" fill="none" />
<path d="M857.3 63.2H869.7L865.3 68.6V74.8H861.9V68.6Z" stroke="#444" stroke-width="0.9" fill="none" />
<path d="M867.4 100.75L869.5 102.85L871.6 100.75" stroke="#555" stroke-width="1.05" fill="none" />
<circle cx="896.7" cy="65.6" r="8.2" fill="none" stroke="#444" stroke-width="1"/>
<line x1="890.8" y1="71.5" x2="882.3" y2="79.6" stroke="#444" stroke-width="1.1" />
<path d="M904.9 100.75L907 102.85L909.1 100.75" stroke="#555" stroke-width="1.05" fill="none" />
<path d="M940 57.3H949L944.5 65.5H950L936 79.2L940 69H934Z" stroke="#1e7bd0" stroke-width="0.9" fill="#6cb2ea" />
</svg>
<div id="tx">
<span class="t" style="top:141.00px;font-size:10.8px;line-height:10.8px;color:#333;left:7.40px;transform:scaleX(0.9287);transform-origin:0 0;">N32</span>
<span class="t" style="top:139.00px;font-size:12.6px;line-height:12.6px;color:#555;font-style:italic;font-family:'Liberation Serif',serif;left:175.60px;transform:scaleX(1.1438);transform-origin:0 0;">fx</span>
<span class="t" style="top:165.00px;font-size:9.4px;line-height:9.4px;color:#3a3a3a;left:52.36px;transform:scaleX(1.0000);transform-origin:0 0;">A</span>
<span class="t" style="top:165.00px;font-size:9.4px;line-height:9.4px;color:#3a3a3a;left:113.11px;transform:scaleX(1.0000);transform-origin:0 0;">B</span>
<span class="t" style="top:165.00px;font-size:9.4px;line-height:9.4px;color:#3a3a3a;left:160.11px;transform:scaleX(1.0000);transform-origin:0 0;">C</span>
<span class="t" style="top:165.00px;font-size:9.4px;line-height:9.4px;color:#3a3a3a;left:205.61px;transform:scaleX(1.0000);transform-origin:0 0;">D</span>
<span class="t" style="top:165.00px;font-size:9.4px;line-height:9.4px;color:#3a3a3a;left:253.36px;transform:scaleX(1.0000);transform-origin:0 0;">E</span>
<span class="t" style="top:165.00px;font-size:9.4px;line-height:9.4px;color:#3a3a3a;left:311.63px;transform:scaleX(1.0000);transform-origin:0 0;">F</span>
<span class="t" style="top:165.00px;font-size:9.4px;line-height:9.4px;color:#3a3a3a;left:387.84px;transform:scaleX(1.0000);transform-origin:0 0;">G</span>
<span class="t" style="top:165.00px;font-size:9.4px;line-height:9.4px;color:#3a3a3a;left:459.11px;transform:scaleX(1.0000);transform-origin:0 0;">H</span>
<span class="t" style="top:165.00px;font-size:9.4px;line-height:9.4px;color:#3a3a3a;left:509.19px;transform:scaleX(1.0000);transform-origin:0 0;">I</span>
<span class="t" style="top:165.00px;font-size:9.4px;line-height:9.4px;color:#3a3a3a;left:544.15px;transform:scaleX(1.0000);transform-origin:0 0;">J</span>
<span class="t" style="top:165.00px;font-size:9.4px;line-height:9.4px;color:#3a3a3a;left:585.11px;transform:scaleX(1.0000);transform-origin:0 0;">K</span>
<span class="t" style="top:165.00px;font-size:9.4px;line-height:9.4px;color:#3a3a3a;left:639.14px;transform:scaleX(1.0000);transform-origin:0 0;">L</span>
<span class="t" style="top:165.00px;font-size:9.4px;line-height:9.4px;color:#3a3a3a;left:691.08px;transform:scaleX(1.0000);transform-origin:0 0;">M</span>
<span class="t" style="top:165.00px;font-size:9.4px;line-height:9.4px;color:#217346;left:744.61px;transform:scaleX(1.0000);transform-origin:0 0;">N</span>
<span class="t" style="top:165.00px;font-size:9.4px;line-height:9.4px;color:#3a3a3a;left:793.34px;transform:scaleX(1.0000);transform-origin:0 0;">O</span>
<span class="t" style="top:165.00px;font-size:9.4px;line-height:9.4px;color:#3a3a3a;left:841.36px;transform:scaleX(1.0000);transform-origin:0 0;">P</span>
<span class="t" style="top:165.00px;font-size:9.4px;line-height:9.4px;color:#3a3a3a;left:907.34px;transform:scaleX(1.0000);transform-origin:0 0;">Q</span>
<span class="t" style="top:165.00px;font-size:9.4px;line-height:9.4px;color:#3a3a3a;left:973.11px;transform:scaleX(1.0000);transform-origin:0 0;">R</span>
<span class="t" style="top:179.00px;font-size:9.5px;line-height:9.5px;color:#3a3a3a;left:6.66px;transform:scaleX(1.0000);transform-origin:0 0;">1</span>
<span class="t" style="top:193.00px;font-size:9.5px;line-height:9.5px;color:#3a3a3a;left:6.66px;transform:scaleX(1.0000);transform-origin:0 0;">2</span>
<span class="t" style="top:206.00px;font-size:9.5px;line-height:9.5px;color:#3a3a3a;left:6.66px;transform:scaleX(1.0000);transform-origin:0 0;">3</span>
<span class="t" style="top:219.00px;font-size:9.5px;line-height:9.5px;color:#3a3a3a;left:6.66px;transform:scaleX(1.0000);transform-origin:0 0;">4</span>
<span class="t" style="top:232.00px;font-size:9.5px;line-height:9.5px;color:#3a3a3a;left:6.66px;transform:scaleX(1.0000);transform-origin:0 0;">5</span>
<span class="t" style="top:246.00px;font-size:9.5px;line-height:9.5px;color:#3a3a3a;left:6.66px;transform:scaleX(1.0000);transform-origin:0 0;">6</span>
<span class="t" style="top:261.00px;font-size:9.5px;line-height:9.5px;color:#3a3a3a;left:6.66px;transform:scaleX(1.0000);transform-origin:0 0;">7</span>
<span class="t" style="top:276.00px;font-size:9.5px;line-height:9.5px;color:#3a3a3a;left:6.66px;transform:scaleX(1.0000);transform-origin:0 0;">8</span>
<span class="t" style="top:291.00px;font-size:9.5px;line-height:9.5px;color:#3a3a3a;left:6.66px;transform:scaleX(1.0000);transform-origin:0 0;">9</span>
<span class="t" style="top:305.00px;font-size:9.5px;line-height:9.5px;color:#3a3a3a;left:4.02px;transform:scaleX(1.0000);transform-origin:0 0;">10</span>
<span class="t" style="top:320.00px;font-size:9.5px;line-height:9.5px;color:#3a3a3a;left:4.37px;transform:scaleX(1.0000);transform-origin:0 0;">11</span>
<span class="t" style="top:335.00px;font-size:9.5px;line-height:9.5px;color:#3a3a3a;left:4.02px;transform:scaleX(1.0000);transform-origin:0 0;">12</span>
<span class="t" style="top:350.00px;font-size:9.5px;line-height:9.5px;color:#3a3a3a;left:4.02px;transform:scaleX(1.0000);transform-origin:0 0;">13</span>
<span class="t" style="top:365.00px;font-size:9.5px;line-height:9.5px;color:#3a3a3a;left:4.02px;transform:scaleX(1.0000);transform-origin:0 0;">14</span>
<span class="t" style="top:380.00px;font-size:9.5px;line-height:9.5px;color:#3a3a3a;left:4.02px;transform:scaleX(1.0000);transform-origin:0 0;">15</span>
<span class="t" style="top:395.00px;font-size:9.5px;line-height:9.5px;color:#3a3a3a;left:4.02px;transform:scaleX(1.0000);transform-origin:0 0;">16</span>
<span class="t" style="top:410.00px;font-size:9.5px;line-height:9.5px;color:#3a3a3a;left:4.02px;transform:scaleX(1.0000);transform-origin:0 0;">17</span>
<span class="t" style="top:425.00px;font-size:9.5px;line-height:9.5px;color:#3a3a3a;left:4.02px;transform:scaleX(1.0000);transform-origin:0 0;">18</span>
<span class="t" style="top:440.00px;font-size:9.5px;line-height:9.5px;color:#3a3a3a;left:4.02px;transform:scaleX(1.0000);transform-origin:0 0;">19</span>
<span class="t" style="top:455.00px;font-size:9.5px;line-height:9.5px;color:#3a3a3a;left:4.02px;transform:scaleX(1.0000);transform-origin:0 0;">20</span>
<span class="t" style="top:470.00px;font-size:9.5px;line-height:9.5px;color:#3a3a3a;left:4.02px;transform:scaleX(1.0000);transform-origin:0 0;">21</span>
<span class="t" style="top:485.00px;font-size:9.5px;line-height:9.5px;color:#3a3a3a;left:4.02px;transform:scaleX(1.0000);transform-origin:0 0;">22</span>
<span class="t" style="top:500.00px;font-size:9.5px;line-height:9.5px;color:#3a3a3a;left:4.02px;transform:scaleX(1.0000);transform-origin:0 0;">23</span>
<span class="t" style="top:179.00px;font-size:9.5px;line-height:9.5px;color:#111;left:21.00px;transform:scaleX(0.9629);transform-origin:0 0;">Report Filter:Start Date = 2020-01-01, End Date = 2020-09-23, Group = All</span>
<span class="t" style="top:192.00px;font-size:9.5px;line-height:9.5px;color:#111;left:21.00px;transform:scaleX(0.9640);transform-origin:0 0;">Report Generated at: 23 September 2020 18:31</span>
<span class="t" style="top:206.00px;font-size:9.5px;line-height:9.5px;color:#fff;font-weight:bold;left:21.00px;transform:scaleX(0.9209);transform-origin:0 0;">Group Name</span>
<span class="t" style="top:206.00px;font-size:9.5px;line-height:9.5px;color:#fff;font-weight:bold;left:94.00px;transform:scaleX(0.9361);transform-origin:0 0;">Site Name</span>
<span class="t" style="top:206.00px;font-size:9.5px;line-height:9.5px;color:#fff;font-weight:bold;left:142.50px;transform:scaleX(0.8925);transform-origin:0 0;">Address 1</span>
<span class="t" style="top:206.00px;font-size:9.5px;line-height:9.5px;color:#fff;font-weight:bold;left:188.50px;transform:scaleX(0.8925);transform-origin:0 0;">Address 2</span>
<span class="t" style="top:206.00px;font-size:9.5px;line-height:9.5px;color:#fff;font-weight:bold;left:233.50px;transform:scaleX(0.8898);transform-origin:0 0;">Post Code</span>
<span class="t" style="top:206.00px;font-size:9.5px;line-height:9.5px;color:#fff;font-weight:bold;left:283.50px;transform:scaleX(0.9363);transform-origin:0 0;">Site Reference</span>
<span class="t" style="top:206.00px;font-size:9.5px;line-height:9.5px;color:#fff;font-weight:bold;left:349.50px;transform:scaleX(0.9916);transform-origin:0 0;">MPAN/MPRN/SPID</span>
<span class="t" style="top:206.00px;font-size:9.5px;line-height:9.5px;color:#fff;font-weight:bold;left:437.30px;transform:scaleX(0.9186);transform-origin:0 0;">Commodity</span>
<span class="t" style="top:206.00px;font-size:9.5px;line-height:9.5px;color:#fff;font-weight:bold;left:491.50px;transform:scaleX(0.8850);transform-origin:0 0;">usage</span>
<span class="t" style="top:206.00px;font-size:9.5px;line-height:9.5px;color:#fff;font-weight:bold;left:534.00px;transform:scaleX(0.8767);transform-origin:0 0;">Usage</span>
<span class="t" style="top:206.00px;font-size:9.5px;line-height:9.5px;color:#fff;font-weight:bold;left:563.30px;transform:scaleX(0.9470);transform-origin:0 0;">Start Date</span>
<span class="t" style="top:206.00px;font-size:9.5px;line-height:9.5px;color:#fff;font-weight:bold;left:617.00px;transform:scaleX(0.8986);transform-origin:0 0;">End Date</span>
<span class="t" style="top:206.00px;font-size:9.5px;line-height:9.5px;color:#fff;font-weight:bold;left:671.00px;transform:scaleX(0.9218);transform-origin:0 0;">Start Read</span>
<span class="t" style="top:206.00px;font-size:9.5px;line-height:9.5px;color:#fff;font-weight:bold;left:724.00px;transform:scaleX(0.8742);transform-origin:0 0;">End Read</span>
<span class="t" style="top:206.00px;font-size:9.5px;line-height:9.5px;color:#fff;font-weight:bold;left:777.30px;transform:scaleX(0.9776);transform-origin:0 0;">Metering</span>
<span class="t" style="top:206.00px;font-size:9.5px;line-height:9.5px;color:#fff;font-weight:bold;left:821.80px;transform:scaleX(0.9513);transform-origin:0 0;">Metering E</span>
<span class="t" style="top:206.00px;font-size:9.5px;line-height:9.5px;color:#fff;font-weight:bold;left:871.50px;transform:scaleX(0.9350);transform-origin:0 0;">File Received Date</span>
<span class="t" style="top:206.00px;font-size:9.5px;line-height:9.5px;color:#fff;font-weight:bold;left:954.20px;transform:scaleX(0.8923);transform-origin:0 0;">source</span>
<span class="t" style="top:219.00px;font-size:9.5px;line-height:9.5px;color:#111;left:21.00px;transform:scaleX(0.9392);transform-origin:0 0;">Regional Offices</span>
<span class="t" style="top:219.00px;font-size:9.5px;line-height:9.5px;color:#111;left:94.00px;transform:scaleX(0.9011);transform-origin:0 0;">PCU Test</span>
<span class="t" style="top:219.00px;font-size:9.5px;line-height:9.5px;color:#111;left:142.50px;transform:scaleX(0.9356);transform-origin:0 0;">Test</span>
<span class="t" style="top:219.00px;font-size:9.5px;line-height:9.5px;color:#111;left:189.00px;transform:scaleX(0.9463);transform-origin:0 0;">00</span>
<span class="t" style="top:219.00px;font-size:9.5px;line-height:9.5px;color:#111;left:233.50px;transform:scaleX(0.9221);transform-origin:0 0;">WC1A 1HB</span>
<span class="t" style="top:219.00px;font-size:9.5px;line-height:9.5px;color:#111;left:283.50px;transform:scaleX(0.9356);transform-origin:0 0;">Test</span>
<span class="t" style="top:219.00px;font-size:9.5px;line-height:9.5px;color:#111;left:349.50px;transform:scaleX(1.0047);transform-origin:0 0;">1324567891134</span>
<span class="t" style="top:219.00px;font-size:9.5px;line-height:9.5px;color:#111;left:437.30px;transform:scaleX(0.9469);transform-origin:0 0;">Power</span>
<span class="t" style="top:219.00px;font-size:9.5px;line-height:9.5px;color:#111;right:494.20px;transform:scaleX(1.0005);transform-origin:100% 0;">1,000.00</span>
<span class="t" style="top:219.00px;font-size:9.5px;line-height:9.5px;color:#111;left:534.00px;transform:scaleX(0.9632);transform-origin:0 0;">kWh</span>
<span class="t" style="top:219.00px;font-size:9.5px;line-height:9.5px;color:#111;left:563.30px;transform:scaleX(1.0411);transform-origin:0 0;">01/02/2020</span>
<span class="t" style="top:219.00px;font-size:9.5px;line-height:9.5px;color:#111;left:617.00px;transform:scaleX(1.0411);transform-origin:0 0;">29/02/2020</span>
<span class="t" style="top:219.00px;font-size:9.5px;line-height:9.5px;color:#111;right:304.20px;transform:scaleX(0.9990);transform-origin:100% 0;">154,942.00</span>
<span class="t" style="top:219.00px;font-size:9.5px;line-height:9.5px;color:#111;right:251.20px;transform:scaleX(0.9990);transform-origin:100% 0;">154,942.00</span>
<span class="t" style="top:219.00px;font-size:9.5px;line-height:9.5px;color:#111;left:776.50px;transform:scaleX(0.8206);transform-origin:0 0;">E</span>
<span class="t" style="top:219.00px;font-size:9.5px;line-height:9.5px;color:#111;left:821.20px;transform:scaleX(0.8206);transform-origin:0 0;">E</span>
<span class="t" style="top:219.00px;font-size:9.5px;line-height:9.5px;color:#111;right:74.00px;transform:scaleX(1.0369);transform-origin:100% 0;">14/08/2020</span>
<span class="t" style="top:219.00px;font-size:9.5px;line-height:9.5px;color:#111;left:954.20px;transform:scaleX(0.9124);transform-origin:0 0;">Billing File</span>
<span class="t" style="top:232.00px;font-size:9.5px;line-height:9.5px;color:#111;left:21.00px;transform:scaleX(0.9392);transform-origin:0 0;">Regional Offices</span>
<span class="t" style="top:232.00px;font-size:9.5px;line-height:9.5px;color:#111;left:94.00px;transform:scaleX(0.9011);transform-origin:0 0;">PCU Test</span>
<span class="t" style="top:232.00px;font-size:9.5px;line-height:9.5px;color:#111;left:142.50px;transform:scaleX(0.9356);transform-origin:0 0;">Test</span>
<span class="t" style="top:232.00px;font-size:9.5px;line-height:9.5px;color:#111;left:189.00px;transform:scaleX(0.9463);transform-origin:0 0;">00</span>
<span class="t" style="top:232.00px;font-size:9.5px;line-height:9.5px;color:#111;left:233.50px;transform:scaleX(0.9221);transform-origin:0 0;">WC1A 1HB</span>
<span class="t" style="top:232.00px;font-size:9.5px;line-height:9.5px;color:#111;left:283.50px;transform:scaleX(0.9356);transform-origin:0 0;">Test</span>
<span class="t" style="top:232.00px;font-size:9.5px;line-height:9.5px;color:#111;left:349.50px;transform:scaleX(1.0047);transform-origin:0 0;">1324567891134</span>
<span class="t" style="top:232.00px;font-size:9.5px;line-height:9.5px;color:#111;left:437.30px;transform:scaleX(0.9469);transform-origin:0 0;">Power</span>
<span class="t" style="top:232.00px;font-size:9.5px;line-height:9.5px;color:#111;right:494.20px;transform:scaleX(1.0200);transform-origin:100% 0;">1,119.00</span>
<span class="t" style="top:232.00px;font-size:9.5px;line-height:9.5px;color:#111;left:534.00px;transform:scaleX(0.9632);transform-origin:0 0;">kWh</span>
<span class="t" style="top:232.00px;font-size:9.5px;line-height:9.5px;color:#111;left:563.30px;transform:scaleX(1.0411);transform-origin:0 0;">01/01/2020</span>
<span class="t" style="top:232.00px;font-size:9.5px;line-height:9.5px;color:#111;left:617.00px;transform:scaleX(1.0411);transform-origin:0 0;">31/01/2020</span>
<span class="t" style="top:232.00px;font-size:9.5px;line-height:9.5px;color:#111;right:304.20px;transform:scaleX(0.9990);transform-origin:100% 0;">153,822.00</span>
<span class="t" style="top:232.00px;font-size:9.5px;line-height:9.5px;color:#111;right:251.20px;transform:scaleX(0.9990);transform-origin:100% 0;">154,941.00</span>
<span class="t" style="top:232.00px;font-size:9.5px;line-height:9.5px;color:#111;left:776.50px;transform:scaleX(0.8206);transform-origin:0 0;">E</span>
<span class="t" style="top:232.00px;font-size:9.5px;line-height:9.5px;color:#111;left:821.20px;transform:scaleX(0.8206);transform-origin:0 0;">E</span>
<span class="t" style="top:232.00px;font-size:9.5px;line-height:9.5px;color:#111;right:74.00px;transform:scaleX(1.0369);transform-origin:100% 0;">14/08/2020</span>
<span class="t" style="top:232.00px;font-size:9.5px;line-height:9.5px;color:#111;left:954.20px;transform:scaleX(0.9124);transform-origin:0 0;">Billing File</span>
<span class="t" style="top:246.00px;font-size:9.5px;line-height:9.5px;color:#111;left:21.00px;transform:scaleX(0.9392);transform-origin:0 0;">Regional Offices</span>
<span class="t" style="top:246.00px;font-size:9.5px;line-height:9.5px;color:#111;left:94.00px;transform:scaleX(0.9011);transform-origin:0 0;">PCU Test</span>
<span class="t" style="top:246.00px;font-size:9.5px;line-height:9.5px;color:#111;left:142.50px;transform:scaleX(0.9356);transform-origin:0 0;">Test</span>
<span class="t" style="top:246.00px;font-size:9.5px;line-height:9.5px;color:#111;left:189.00px;transform:scaleX(0.9463);transform-origin:0 0;">00</span>
<span class="t" style="top:246.00px;font-size:9.5px;line-height:9.5px;color:#111;left:233.50px;transform:scaleX(0.9221);transform-origin:0 0;">WC1A 1HB</span>
<span class="t" style="top:246.00px;font-size:9.5px;line-height:9.5px;color:#111;left:283.50px;transform:scaleX(0.9356);transform-origin:0 0;">Test</span>
<span class="t" style="top:246.00px;font-size:9.5px;line-height:9.5px;color:#111;left:349.50px;transform:scaleX(1.0047);transform-origin:0 0;">1324567891134</span>
<span class="t" style="top:246.00px;font-size:9.5px;line-height:9.5px;color:#111;left:437.30px;transform:scaleX(0.9469);transform-origin:0 0;">Power</span>
<span class="t" style="top:246.00px;font-size:9.5px;line-height:9.5px;color:#111;right:494.20px;transform:scaleX(1.0200);transform-origin:100% 0;">1,119.00</span>
<span class="t" style="top:246.00px;font-size:9.5px;line-height:9.5px;color:#111;left:534.00px;transform:scaleX(0.9632);transform-origin:0 0;">kWh</span>
<span class="t" style="top:246.00px;font-size:9.5px;line-height:9.5px;color:#111;left:563.30px;transform:scaleX(1.0411);transform-origin:0 0;">01/03/2020</span>
<span class="t" style="top:246.00px;font-size:9.5px;line-height:9.5px;color:#111;left:617.00px;transform:scaleX(1.0411);transform-origin:0 0;">30/04/2020</span>
<span class="t" style="top:246.00px;font-size:9.5px;line-height:9.5px;color:#111;right:304.20px;transform:scaleX(0.9990);transform-origin:100% 0;">155,943.00</span>
<span class="t" style="top:246.00px;font-size:9.5px;line-height:9.5px;color:#111;right:251.20px;transform:scaleX(0.9990);transform-origin:100% 0;">156,943.00</span>
<span class="t" style="top:246.00px;font-size:9.5px;line-height:9.5px;color:#111;left:776.50px;transform:scaleX(0.8206);transform-origin:0 0;">E</span>
<span class="t" style="top:246.00px;font-size:9.5px;line-height:9.5px;color:#111;left:821.20px;transform:scaleX(0.8206);transform-origin:0 0;">E</span>
<span class="t" style="top:246.00px;font-size:9.5px;line-height:9.5px;color:#111;right:74.00px;transform:scaleX(1.0369);transform-origin:100% 0;">14/08/2020</span>
<span class="t" style="top:246.00px;font-size:9.5px;line-height:9.5px;color:#111;left:954.20px;transform:scaleX(0.9124);transform-origin:0 0;">Billing File</span>
<span class="t" style="top:512.00px;font-size:10.5px;line-height:10.5px;color:#217346;font-weight:bold;left:69.30px;transform:scaleX(0.9711);transform-origin:0 0;">Consumption</span>
<span class="t" style="top:532.00px;font-size:9.5px;line-height:9.5px;color:#555;left:996.80px;transform:scaleX(0.8520);transform-origin:0 0;">96%</span>
<span class="t" style="top:10.00px;font-size:10.0px;line-height:10.0px;color:#ffffff;left:16.40px;transform:scaleX(0.9224);transform-origin:0 0;">AutoSave</span>
<span class="t" style="top:10.00px;font-size:8.2px;line-height:8.2px;color:#ffffff;left:76.80px;transform:scaleX(0.9457);transform-origin:0 0;">Off</span>
<span class="t" style="top:9.00px;font-size:10.0px;line-height:10.0px;color:#ffffff;left:216.00px;transform:scaleX(0.9545);transform-origin:0 0;">Meter NHH Consumption Detail Report (9)</span>
<span class="t" style="top:9.00px;font-size:10.0px;line-height:10.0px;color:#ffffff;left:401.40px;transform:scaleX(0.9608);transform-origin:0 0;">-</span>
<span class="t" style="top:9.00px;font-size:10.0px;line-height:10.0px;color:#ffffff;left:410.00px;transform:scaleX(0.8179);transform-origin:0 0;">Excel</span>
<span class="t" style="top:10.00px;font-size:10.0px;line-height:10.0px;color:#1f6a40;left:482.70px;transform:scaleX(0.8616);transform-origin:0 0;">Search</span>
<span class="t" style="top:10.00px;font-size:10.0px;line-height:10.0px;color:#ffffff;left:802.50px;transform:scaleX(0.8755);transform-origin:0 0;">Keli Kulaj</span>
<span class="t" style="top:10.00px;font-size:8.2px;line-height:8.2px;color:#ffffff;left:853.20px;transform:scaleX(0.8593);transform-origin:0 0;">KK</span>
<span class="t" style="top:36.00px;font-size:10.4px;line-height:10.4px;color:#444;left:13.00px;transform:scaleX(0.9428);transform-origin:0 0;">File</span>
<span class="t" style="top:36.00px;font-size:10.4px;line-height:10.4px;color:#444;left:105.50px;transform:scaleX(0.9419);transform-origin:0 0;">Insert</span>
<span class="t" style="top:36.00px;font-size:10.4px;line-height:10.4px;color:#444;left:154.50px;transform:scaleX(0.9503);transform-origin:0 0;">Page Layout</span>
<span class="t" style="top:36.00px;font-size:10.4px;line-height:10.4px;color:#444;left:234.00px;transform:scaleX(0.9805);transform-origin:0 0;">Formulas</span>
<span class="t" style="top:36.00px;font-size:10.4px;line-height:10.4px;color:#444;left:298.50px;transform:scaleX(0.9787);transform-origin:0 0;">Data</span>
<span class="t" style="top:36.00px;font-size:10.4px;line-height:10.4px;color:#444;left:341.50px;transform:scaleX(0.9384);transform-origin:0 0;">Review</span>
<span class="t" style="top:36.00px;font-size:10.4px;line-height:10.4px;color:#444;left:396.00px;transform:scaleX(0.9841);transform-origin:0 0;">View</span>
<span class="t" style="top:36.00px;font-size:10.4px;line-height:10.4px;color:#444;left:440.30px;transform:scaleX(0.9911);transform-origin:0 0;">Help</span>
<span class="t" style="top:36.00px;font-size:10.4px;line-height:10.4px;color:#3a3a3a;font-weight:bold;left:53.80px;transform:scaleX(1.0106);transform-origin:0 0;">Home</span>
<span class="t" style="top:36.00px;font-size:10.4px;line-height:10.4px;color:#217346;font-weight:bold;left:893.80px;transform:scaleX(0.9237);transform-origin:0 0;">Share</span>
<span class="t" style="top:36.00px;font-size:10.4px;line-height:10.4px;color:#217346;font-weight:bold;left:954.00px;transform:scaleX(0.9825);transform-origin:0 0;">Comments</span>
<span class="t" style="top:117.00px;font-size:9.1px;line-height:9.1px;color:#555;left:12.50px;transform:scaleX(0.9114);transform-origin:0 0;">Clipboard</span>
<span class="t" style="top:117.00px;font-size:9.1px;line-height:9.1px;color:#555;left:147.00px;transform:scaleX(0.8787);transform-origin:0 0;">Font</span>
<span class="t" style="top:117.00px;font-size:9.1px;line-height:9.1px;color:#555;left:329.00px;transform:scaleX(0.9390);transform-origin:0 0;">Alignment</span>
<span class="t" style="top:117.00px;font-size:9.1px;line-height:9.1px;color:#555;left:496.80px;transform:scaleX(0.9269);transform-origin:0 0;">Number</span>
<span class="t" style="top:117.00px;font-size:9.1px;line-height:9.1px;color:#555;left:643.00px;transform:scaleX(0.8071);transform-origin:0 0;">Styles</span>
<span class="t" style="top:117.00px;font-size:9.1px;line-height:9.1px;color:#555;left:759.50px;transform:scaleX(0.8405);transform-origin:0 0;">Cells</span>
<span class="t" style="top:117.00px;font-size:9.1px;line-height:9.1px;color:#555;left:849.00px;transform:scaleX(0.9164);transform-origin:0 0;">Editing</span>
<span class="t" style="top:117.00px;font-size:9.1px;line-height:9.1px;color:#555;left:932.00px;transform:scaleX(0.8400);transform-origin:0 0;">Ideas</span>
<span class="t" style="top:86.00px;font-size:9.7px;line-height:9.7px;color:#444;left:11.50px;transform:scaleX(0.8668);transform-origin:0 0;">Paste</span>
<span class="t" style="top:67.00px;font-size:9.7px;line-height:9.7px;color:#333;left:83.50px;transform:scaleX(0.9458);transform-origin:0 0;">Calibri</span>
<span class="t" style="top:67.00px;font-size:9.7px;line-height:9.7px;color:#333;left:177.40px;transform:scaleX(0.8527);transform-origin:0 0;">10</span>
<span class="t" style="top:62.00px;font-size:13px;line-height:13px;color:#444;left:212.00px;transform:scaleX(1.0379);transform-origin:0 0;">A</span>
<span class="t" style="top:65.00px;font-size:10.5px;line-height:10.5px;color:#444;left:230.00px;transform:scaleX(1.0708);transform-origin:0 0;">A</span>
<span class="t" style="top:90.00px;font-size:10.6px;line-height:10.6px;color:#333;font-weight:bold;left:87.00px;transform:scaleX(0.9144);transform-origin:0 0;">B</span>
<span class="t" style="top:90.00px;font-size:11.5px;line-height:11.5px;color:#444;font-style:italic;font-family:'Liberation Serif',serif;left:104.80px;transform:scaleX(1.3577);transform-origin:0 0;">I</span>
<span class="t" style="top:91.00px;font-size:10.2px;line-height:10.2px;color:#444;left:120.80px;transform:scaleX(0.9231);transform-origin:0 0;">U</span>
<span class="t" style="top:89.00px;font-size:11.5px;line-height:11.5px;color:#444;left:217.80px;transform:scaleX(1.1342);transform-origin:0 0;">A</span>
<span class="t" style="top:63.00px;font-size:9px;line-height:9px;color:#444;left:357.00px;transform:scaleX(0.9290);transform-origin:0 0;">ab</span>
<span class="t" style="top:69.00px;font-size:9px;line-height:9px;color:#444;left:357.00px;transform:scaleX(0.8889);transform-origin:0 0;">c</span>
<span class="t" style="top:67.00px;font-size:9.7px;line-height:9.7px;color:#444;left:370.00px;transform:scaleX(0.9467);transform-origin:0 0;">Wrap Text</span>
<span class="t" style="top:92.00px;font-size:9.7px;line-height:9.7px;color:#444;left:370.00px;transform:scaleX(0.9785);transform-origin:0 0;">Merge &amp; Center</span>
<span class="t" style="top:67.00px;font-size:9.7px;line-height:9.7px;color:#333;left:469.30px;transform:scaleX(0.9041);transform-origin:0 0;">General</span>
<span class="t" style="top:89.00px;font-size:13.6px;line-height:13.6px;color:#444;left:499.00px;transform:scaleX(1.0172);transform-origin:0 0;">%</span>
<span class="t" style="top:89.00px;font-size:8.2px;line-height:8.2px;color:#444;left:546.00px;transform:scaleX(0.9429);transform-origin:0 0;">0</span>
<span class="t" style="top:95.00px;font-size:8.2px;line-height:8.2px;color:#444;left:539.80px;transform:scaleX(0.9211);transform-origin:0 0;">.00</span>
<span class="t" style="top:89.00px;font-size:8.2px;line-height:8.2px;color:#444;left:556.90px;transform:scaleX(0.9211);transform-origin:0 0;">.00</span>
<span class="t" style="top:95.00px;font-size:8.2px;line-height:8.2px;color:#444;left:561.60px;transform:scaleX(0.8481);transform-origin:0 0;">.0</span>
<span class="t" style="top:86.00px;font-size:9.7px;line-height:9.7px;color:#444;left:588.00px;transform:scaleX(0.9890);transform-origin:0 0;">Conditional</span>
<span class="t" style="top:98.00px;font-size:9.7px;line-height:9.7px;color:#444;left:584.80px;transform:scaleX(0.9857);transform-origin:0 0;">Formatting</span>
<span class="t" style="top:86.00px;font-size:9.7px;line-height:9.7px;color:#444;left:644.80px;transform:scaleX(0.9322);transform-origin:0 0;">Format as</span>
<span class="t" style="top:98.00px;font-size:9.7px;line-height:9.7px;color:#444;left:650.00px;transform:scaleX(0.9185);transform-origin:0 0;">Table</span>
<span class="t" style="top:86.00px;font-size:9.7px;line-height:9.7px;color:#444;left:699.00px;transform:scaleX(0.8857);transform-origin:0 0;">Cell</span>
<span class="t" style="top:98.00px;font-size:9.7px;line-height:9.7px;color:#444;left:690.30px;transform:scaleX(0.8707);transform-origin:0 0;">Styles</span>
<span class="t" style="top:59.00px;font-size:9.7px;line-height:9.7px;color:#444;left:755.80px;transform:scaleX(0.9275);transform-origin:0 0;">Insert</span>
<span class="t" style="top:77.00px;font-size:9.7px;line-height:9.7px;color:#444;left:755.80px;transform:scaleX(0.9166);transform-origin:0 0;">Delete</span>
<span class="t" style="top:95.00px;font-size:9.7px;line-height:9.7px;color:#444;left:755.80px;transform:scaleX(0.9603);transform-origin:0 0;">Format</span>
<span class="t" style="top:57.00px;font-size:12.4px;line-height:12.4px;color:#2b88d8;left:846.90px;transform:scaleX(1.0639);transform-origin:0 0;">A</span>
<span class="t" style="top:68.00px;font-size:12.4px;line-height:12.4px;color:#444;left:847.20px;transform:scaleX(1.0562);transform-origin:0 0;">Z</span>
<span class="t" style="top:86.00px;font-size:9.7px;line-height:9.7px;color:#444;left:845.00px;transform:scaleX(1.0017);transform-origin:0 0;">Sort &amp;</span>
<span class="t" style="top:98.00px;font-size:9.7px;line-height:9.7px;color:#444;left:844.00px;transform:scaleX(0.9278);transform-origin:0 0;">Filter</span>
<span class="t" style="top:86.00px;font-size:9.7px;line-height:9.7px;color:#444;left:880.00px;transform:scaleX(0.9809);transform-origin:0 0;">Find &amp;</span>
<span class="t" style="top:98.00px;font-size:9.7px;line-height:9.7px;color:#444;left:877.00px;transform:scaleX(0.9088);transform-origin:0 0;">Select</span>
<span class="t" style="top:86.00px;font-size:9.7px;line-height:9.7px;color:#444;left:930.80px;transform:scaleX(0.9187);transform-origin:0 0;">Ideas</span>
</div>
</body></html>
